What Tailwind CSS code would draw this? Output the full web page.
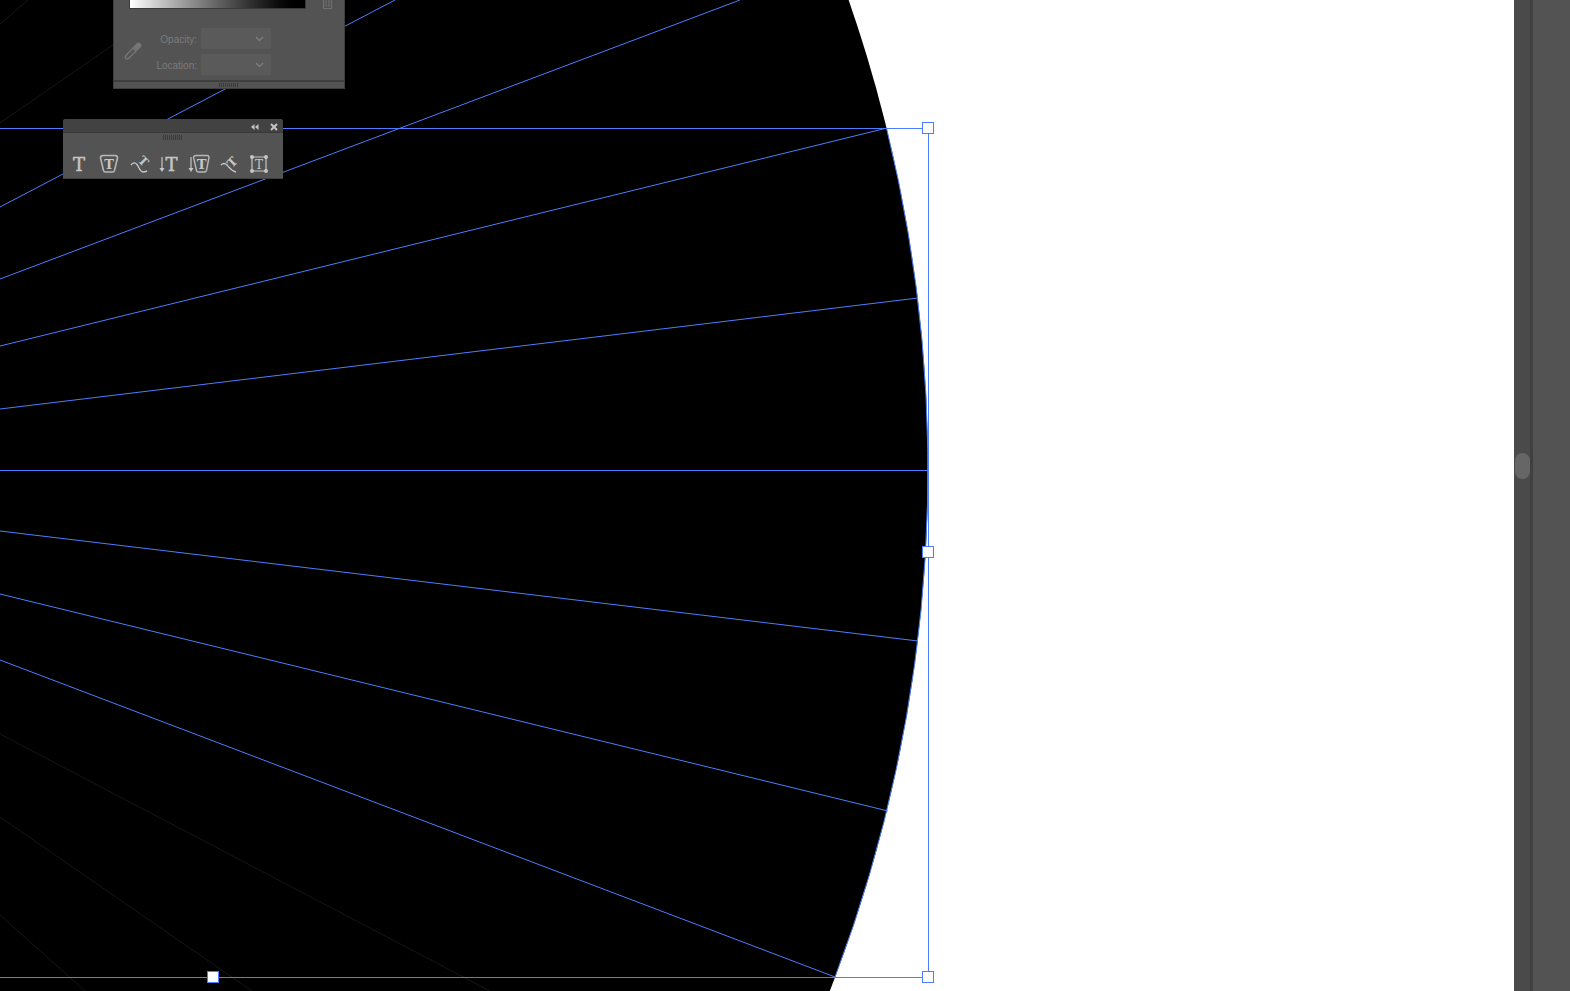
<!DOCTYPE html>
<html lang="en">
  <head>
    <meta charset="UTF-8" />
    <meta name="viewport" content="width=device-width, initial-scale=1.0" />
    <title>Artboard</title>
    <script src="https://cdn.jsdelivr.net/npm/@tailwindcss/browser@4"></script>
  </head>
  <body class="bg-white overflow-hidden font-['Liberation_Sans',sans-serif]">
    <div class="flex w-[1570px] h-[991px] overflow-hidden">
      <!-- canvas -->
      <main class="relative flex-1 overflow-hidden bg-white">
        <svg class="block" width="1514" height="991" viewBox="0 0 1514 991" fill="none">
          <circle cx="-503" cy="470" r="1431" fill="#000" />
          <!-- dim rays -->
          <g stroke="#161616" stroke-width="1">
            <line x1="0" y1="24" x2="28" y2="0" />
            <line x1="0" y1="123" x2="178" y2="0" />
            <line x1="0" y1="734" x2="490" y2="991" />
            <line x1="0" y1="817" x2="252" y2="991" />
            <line x1="0" y1="915" x2="85" y2="991" />
          </g>
          <!-- selected rays -->
          <g stroke="#4d7dff" stroke-width="1">
            <line x1="0" y1="207" x2="395" y2="0" />
            <line x1="0" y1="279" x2="740" y2="0" />
            <line x1="0" y1="346" x2="887" y2="128" />
            <line x1="0" y1="409" x2="918" y2="298" />
            <line x1="0" y1="531" x2="918" y2="641" />
            <line x1="0" y1="594" x2="888" y2="811" />
            <line x1="0" y1="660" x2="835" y2="977" />
            <path d="M886.5 128A1431 1431 0 0 1 835 977" />
          </g>
          <!-- bounding box -->
          <g stroke="#4d7dff" stroke-width="1" shape-rendering="crispEdges">
            <line x1="0" y1="470.5" x2="928" y2="470.5" />
            <line x1="0" y1="128.5" x2="928" y2="128.5" />
            <line x1="0" y1="977.5" x2="928" y2="977.5" />
            <line x1="928.5" y1="128" x2="928.5" y2="978" />
            <g fill="#fff">
              <rect x="922.5" y="122.5" width="11" height="11" />
              <rect x="922.5" y="546.5" width="11" height="11" />
              <rect x="922.5" y="971.5" width="11" height="11" />
              <rect x="207.5" y="971.5" width="11" height="11" />
            </g>
          </g>
        </svg>

        <!-- gradient panel -->
        <div class="absolute left-[113px] top-0 w-[232px] h-[89px] flex flex-col bg-[#535353] border-x border-b border-[#3e3e3e]">
          <div class="flex pl-[15px] h-[9px]">
            <div class="w-[177px] h-[9px] bg-linear-to-r from-white to-black border-x border-b border-[#3a3a3a]"></div>
            <svg class="ml-[16px]" width="11" height="9" viewBox="0 0 11 9" fill="none" stroke="#727272">
              <path d="M1.5 0V8.5H9.5V0M4 0V7M7 0V7" />
            </svg>
          </div>
          <div class="flex mt-[19px]">
            <svg class="ml-[9px] mt-[14px]" width="19" height="19" viewBox="0 0 19 19" fill="none" stroke="#767676" stroke-width="1.4">
              <path d="M3 16.5C2 15.5 2 14.5 3 13.5L10 6L13 9L5.5 16.5C4.8 17.2 3.8 17.2 3 16.5Z" />
              <path d="M11 5L14 2C15 1 16 1 17 2C18 3 18 4 17 5L14 8Z" fill="#767676" />
            </svg>
            <div class="flex flex-col gap-[5px] ml-[14px]">
              <div class="flex items-center gap-[4px]">
                <span class="w-[41px] pt-[1px] text-right text-[10px] text-[#7b7b7b]">Opacity:</span>
                <div class="w-[70px] h-[21px] bg-[#5a5a5a] flex items-center justify-end pr-[7px]">
                  <svg width="9" height="6" viewBox="0 0 9 6" fill="none" stroke="#7c7c7c" stroke-width="1.4"><path d="M1 1L4.5 4.5L8 1" /></svg>
                </div>
              </div>
              <div class="flex items-center gap-[4px]">
                <span class="w-[41px] pt-[1px] text-right text-[10px] text-[#7b7b7b]">Location:</span>
                <div class="w-[70px] h-[21px] bg-[#5a5a5a] flex items-center justify-end pr-[7px]">
                  <svg width="9" height="6" viewBox="0 0 9 6" fill="none" stroke="#7c7c7c" stroke-width="1.4"><path d="M1 1L4.5 4.5L8 1" /></svg>
                </div>
              </div>
            </div>
          </div>
          <div class="mt-[5px] h-[2px] bg-[#3f3f3f]"></div>
          <div class="flex justify-center pt-[1px] pr-[1px]">
            <div class="w-[19px] h-[4px] bg-[repeating-linear-gradient(90deg,#3a3a3a_0_1px,transparent_1px_2px)]"></div>
          </div>
        </div>

        <!-- type on a path panel -->
        <div class="absolute left-[63px] top-[119px] w-[220px] h-[60px] flex flex-col rounded-t-[3px] overflow-hidden bg-[#535353] border-b border-[#3e3e3e]">
          <div class="flex items-center justify-end h-[13px] pt-[2px] bg-[#424242] gap-[11px] pr-[5px]">
            <svg width="8" height="6" viewBox="0 0 8 6" fill="#c4c4c4"><path d="M0 3L3.5 0V6ZM4 3L7.5 0V6Z" /></svg>
            <svg width="8" height="8" viewBox="0 0 8 8" fill="none" stroke="#c4c4c4" stroke-width="2"><path d="M1 1L7 7M7 1L1 7" /></svg>
          </div>
          <div class="h-px bg-[#393939]"></div>
          <div class="flex justify-center pt-[2px] pr-[1px]">
            <div class="w-[19px] h-[5px] bg-[repeating-linear-gradient(90deg,#3a3a3a_0_1px,transparent_1px_2px)]"></div>
          </div>
          <div class="flex gap-[10px] pl-[6px] pt-[14px]">
            <svg width="20" height="20" viewBox="0 0 20 20" fill="#c6c6c6" stroke="#c6c6c6" stroke-width=".5" font-family="DejaVu Serif">
              <text x="10" y="17" font-size="18" text-anchor="middle">T</text>
            </svg>
            <svg width="20" height="20" viewBox="0 0 20 20" fill="#c6c6c6" font-family="DejaVu Serif">
              <path d="M1.5 4C1.5 2.5 2.5 1.5 4 1.5H16C17.5 1.5 18.5 2.5 18.5 4L15.5 16.5C15.2 17.6 14.6 18 13.5 18H6.500C5.400 18 4.800 17.600 4.500 16.500Z" fill="none" stroke="#b8b8b8" stroke-width="1.600" />
              <text x="10" y="14.500" font-size="13" font-weight="700" text-anchor="middle">T</text>
            </svg>
            <svg width="20" height="20" viewBox="0 0 20 20" fill="#c6c6c6" font-family="DejaVu Serif" overflow="visible">
              <path d="M2 11C4 8.500 6 8 8 10.500C10 13 11 18 14 18C16 18 17 17.500 18 17" fill="none" stroke="#c6c6c6" stroke-width="1.400" />
              <text x="14.500" y="11.400" font-size="12" font-weight="700" text-anchor="middle" transform="rotate(45 14.500 7)">T</text>
            </svg>
            <svg width="20" height="20" viewBox="0 0 20 20" fill="#c6c6c6" font-family="DejaVu Serif">
              <path d="M3 3V16" fill="none" stroke="#c6c6c6" stroke-width="1.200" />
              <path d="M0.500 14H5.500L3 18Z" />
              <text x="12.500" y="17" font-size="18" stroke="#c6c6c6" stroke-width=".5" text-anchor="middle">T</text>
            </svg>
            <svg width="20" height="20" viewBox="0 0 20 20" fill="#c6c6c6" font-family="DejaVu Serif" overflow="visible">
              <path d="M2 3V16" fill="none" stroke="#c6c6c6" stroke-width="1.200" />
              <path d="M-0.500 14H4.500L2 18Z" />
              <path d="M4.500 3.500C4.500 2.500 5.500 1.500 7 1.500H18C19.500 1.500 20 2.500 20 3.500L17.500 16.500C17.200 17.600 16.600 18 15.500 18H9.500C8.400 18 7.800 17.600 7.500 16.500Z" fill="none" stroke="#b8b8b8" stroke-width="1.400" />
              <text x="12.500" y="14.500" font-size="13" font-weight="700" text-anchor="middle">T</text>
            </svg>
            <svg width="20" height="20" viewBox="0 0 20 20" fill="#c6c6c6" font-family="DejaVu Serif" overflow="visible">
              <path d="M2 11C4 9 6 9 8 11C10 13 12 17 17 18" fill="none" stroke="#c6c6c6" stroke-width="1.400" />
              <text x="13" y="12.400" font-size="12" font-weight="700" text-anchor="middle" transform="rotate(-45 13 8)">T</text>
            </svg>
            <svg width="20" height="20" viewBox="0 0 20 20" fill="#c6c6c6" font-family="DejaVu Serif">
              <path d="M3 3H17V17H3Z" fill="none" stroke="#c6c6c6" stroke-width="1.200" />
              <circle cx="3" cy="3" r="2" />
              <circle cx="17" cy="3" r="2" />
              <circle cx="3" cy="17" r="2" />
              <circle cx="17" cy="17" r="2" />
              <text x="10" y="14.500" font-size="12" text-anchor="middle">T</text>
            </svg>
          </div>
        </div>
      </main>

      <!-- right dock -->
      <aside class="flex w-[56px]">
        <div class="w-[16px] bg-[#4a4a4a] pt-[453px] pl-px">
          <div class="w-[15px] h-[26px] rounded-full bg-[#666666]"></div>
        </div>
        <div class="w-[3px] bg-[#404040]"></div>
        <div class="flex-1 bg-[#535353]"></div>
      </aside>
    </div>
  </body>
</html>
